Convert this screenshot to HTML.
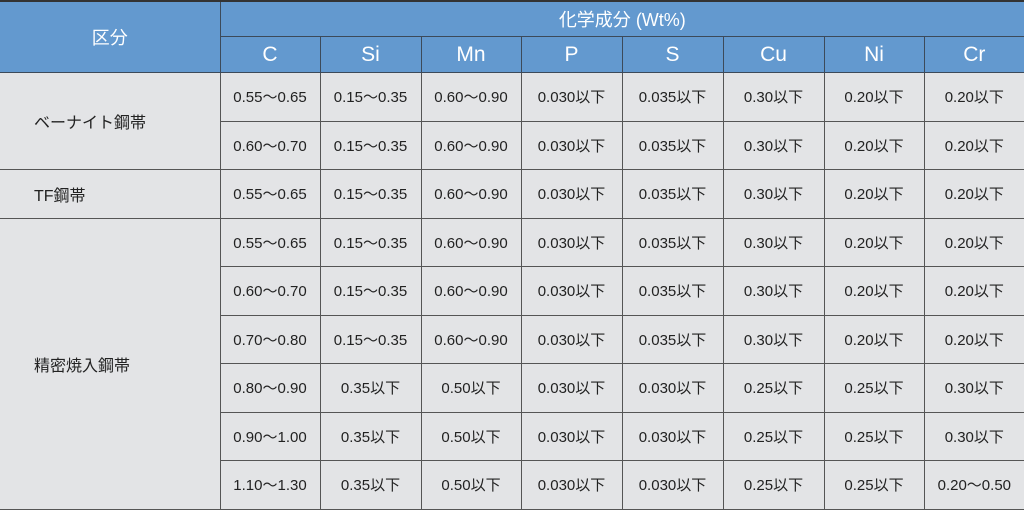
<!DOCTYPE html>
<html><head><meta charset="utf-8"><style>
body{margin:0;width:1024px;height:510px;overflow:hidden;background:#e3e4e6;font-family:"Liberation Sans","Noto Sans CJK JP",sans-serif;}
table{border-collapse:collapse;table-layout:fixed;width:1024px;position:absolute;left:0;top:0;}
td,th{padding:0;text-align:center;font-weight:normal;border:1px solid #555;}
th{background:#6399cf;color:#fff;border-color:#3c4a5a;}
.h1{height:34px;font-size:18px;}
.h2{height:35px;font-size:21px;}
td{height:47.5px;font-size:15px;color:#222;}
td.l{text-align:left;padding-left:34px;font-size:16px;}
tr>*:first-child{border-left:none}
tr>*:last-child{border-right:none}
table{border-top:2px solid #333}
</style></head><body>
<table>
<colgroup><col style="width:220px"><col style="width:100px"><col style="width:101px"><col style="width:100px"><col style="width:101px"><col style="width:101px"><col style="width:101px"><col style="width:100px"><col style="width:100px"></colgroup>
<tr><th rowspan="2" style="font-size:18px">区分</th><th colspan="8" class="h1">化学成分 (Wt%)</th></tr>
<tr><th class="h2">C</th><th class="h2">Si</th><th class="h2">Mn</th><th class="h2">P</th><th class="h2">S</th><th class="h2">Cu</th><th class="h2">Ni</th><th class="h2">Cr</th></tr>
<tr><td rowspan="2" class="l">ベーナイト鋼帯</td><td>0.55〜0.65</td><td>0.15〜0.35</td><td>0.60〜0.90</td><td>0.030以下</td><td>0.035以下</td><td>0.30以下</td><td>0.20以下</td><td>0.20以下</td></tr>
<tr><td>0.60〜0.70</td><td>0.15〜0.35</td><td>0.60〜0.90</td><td>0.030以下</td><td>0.035以下</td><td>0.30以下</td><td>0.20以下</td><td>0.20以下</td></tr>
<tr><td class="l">TF鋼帯</td><td>0.55〜0.65</td><td>0.15〜0.35</td><td>0.60〜0.90</td><td>0.030以下</td><td>0.035以下</td><td>0.30以下</td><td>0.20以下</td><td>0.20以下</td></tr>
<tr><td rowspan="6" class="l">精密焼入鋼帯</td><td>0.55〜0.65</td><td>0.15〜0.35</td><td>0.60〜0.90</td><td>0.030以下</td><td>0.035以下</td><td>0.30以下</td><td>0.20以下</td><td>0.20以下</td></tr>
<tr><td>0.60〜0.70</td><td>0.15〜0.35</td><td>0.60〜0.90</td><td>0.030以下</td><td>0.035以下</td><td>0.30以下</td><td>0.20以下</td><td>0.20以下</td></tr>
<tr><td>0.70〜0.80</td><td>0.15〜0.35</td><td>0.60〜0.90</td><td>0.030以下</td><td>0.035以下</td><td>0.30以下</td><td>0.20以下</td><td>0.20以下</td></tr>
<tr><td>0.80〜0.90</td><td>0.35以下</td><td>0.50以下</td><td>0.030以下</td><td>0.030以下</td><td>0.25以下</td><td>0.25以下</td><td>0.30以下</td></tr>
<tr><td>0.90〜1.00</td><td>0.35以下</td><td>0.50以下</td><td>0.030以下</td><td>0.030以下</td><td>0.25以下</td><td>0.25以下</td><td>0.30以下</td></tr>
<tr><td>1.10〜1.30</td><td>0.35以下</td><td>0.50以下</td><td>0.030以下</td><td>0.030以下</td><td>0.25以下</td><td>0.25以下</td><td>0.20〜0.50</td></tr>
</table>
</body></html>
